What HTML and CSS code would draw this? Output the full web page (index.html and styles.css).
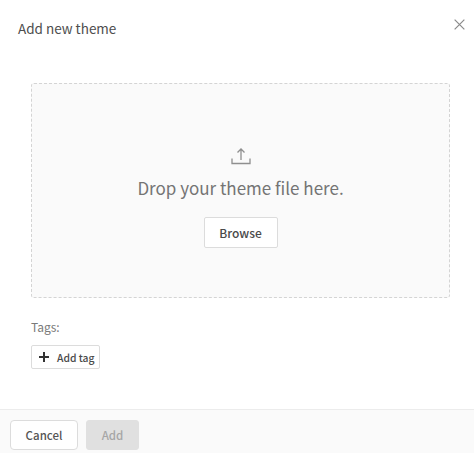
FILE: index.html
```html
<!DOCTYPE html>
<html lang="en">
<head>
<meta charset="utf-8">
<title>Add new theme</title>
<link rel="stylesheet" href="styles.css">
</head>
<body>
<div class="dialog">
  <header class="head">
    <h1 class="title">Add new theme</h1>
    <button class="close" aria-label="Close">
      <svg width="11" height="11" viewBox="0 0 12 12"><path d="M.7.7l10.6 10.6M11.3.7L.7 11.3" stroke="#8a8a8a" stroke-width="1.3" fill="none"/></svg>
    </button>
  </header>
  <main class="body">
    <section class="drop">
      <svg class="upload" width="20" height="18" viewBox="0 0 20 18"><path d="M10 13V2M6.500 5.500L10 2l3.500 3.500M1 11.500V16.500h18V11.500" stroke="#8f8f8f" stroke-width="1.300" fill="none"/></svg>
      <p class="drop-text">Drop your theme file here.</p>
      <button class="btn browse">Browse</button>
    </section>
    <div class="tags">
      <div class="tags-label">Tags:</div>
      <button class="btn add-tag">
        <svg width="10" height="10" viewBox="0 0 10 10"><path d="M5 0v10M0 5h10" stroke="#333" stroke-width="2" fill="none"/></svg>
        <span>Add tag</span>
      </button>
    </div>
  </main>
  <footer class="foot">
    <button class="btn cancel">Cancel</button>
    <button class="btn add" disabled>Add</button>
  </footer>
</div>
</body>
</html>
```
FILE: styles.css
```css
* { box-sizing: border-box; }
html, body { margin: 0; height: 100%; }
body { background: #fff; font-family: "Noto Sans CJK SC", "Noto Sans", sans-serif; color: #4a4a4a; }
.dialog { width: 474px; height: 453px; display: flex; flex-direction: column; overflow: hidden; }
.head { height: 83px; padding: 18px 9px 0 18px; display: flex; justify-content: space-between; align-items: flex-start; }
.title { margin: 0; font-size: 13.500px; font-weight: 400; line-height: 20px; color: #4d4d4d; }
.close { border: 0; background: none; padding: 0; width: 11px; height: 11px; margin-top: 1px; display: block; }
.close svg { display: block; }
.body { flex: 1; padding: 0 24px 0 31px; }
.drop { height: 215px; background: #fafafa; border: 1px dashed #d4d4d4; border-radius: 3px; display: flex; flex-direction: column; align-items: center; padding-top: 63px; }
.upload { display: block; }
.drop-text { margin: 10px 0 0; font-size: 17px; line-height: 26px; color: #747474; }
.btn { font-family: inherit; border: 1px solid #dcdcdc; border-radius: 2px; background: #fff; color: #4a4a4a; padding: 0; }
.browse { margin-top: 16px; width: 74px; height: 31px; font-size: 12px; font-weight: 500; }
.tags { margin-top: 20px; }
.tags-label { font-size: 12px; line-height: 18px; color: #7a7a7a; }
.add-tag { margin-top: 9px; width: 69px; height: 24px; display: flex; align-items: center; gap: 8px; padding-left: 7px; font-size: 10.300px; font-weight: 500; }
.add-tag svg { display: block; }
.foot { height: 44px; border-top: 1px solid #ececec; background: #fafafa; padding: 10px 0 0 10px; display: flex; gap: 8px; align-items: flex-start; }
.cancel { width: 68px; height: 30px; font-size: 11.500px; font-weight: 500; border-radius: 4px; color: #555; }
.add { width: 53px; height: 30px; font-size: 11.500px; font-weight: 500; background: #e0e0e0; border-color: #e0e0e0; color: #a6a6a6; border-radius: 3px; }
```
